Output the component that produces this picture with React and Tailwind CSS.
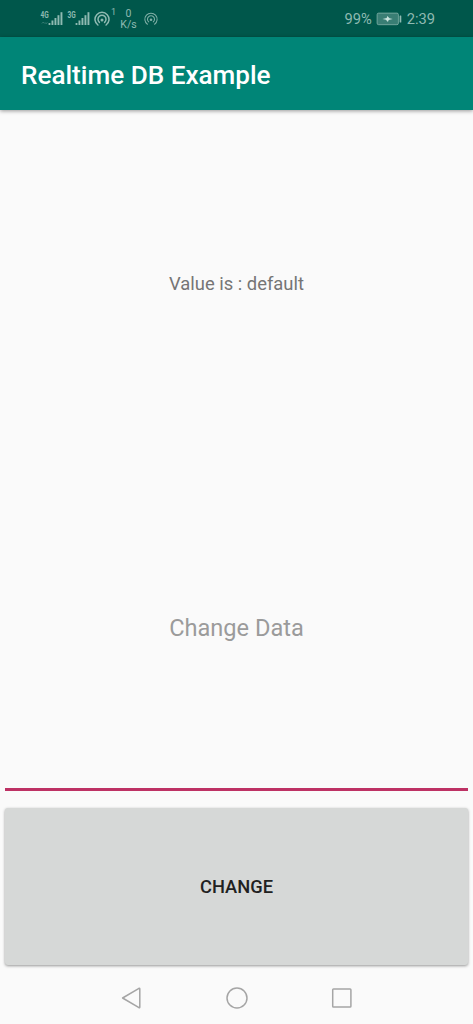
import React, { useState } from 'react';

const SignalIcon = ({ label, idle }) => (
  <svg width="22" height="16" viewBox="0 0 22 16" className="shrink-0 overflow-visible">
    <text x="-0.6" y="6.8" fontSize="8.5" fontWeight="700" textLength="8.2" lengthAdjust="spacingAndGlyphs" fill="currentColor">
      {label}
    </text>
    {idle && (
      <path d="M0.8 12.6l1.3-1.6 1.3 1.6M3.8 11.2l1.3 1.6 1.3-1.6" fill="none" stroke="currentColor" strokeWidth="0.8" opacity="0.4" />
    )}
    <g fill="currentColor">
      <rect x="7.6" y="12" width="1.8" height="2" />
      <rect x="10.5" y="9.5" width="1.9" height="4.5" />
      <rect x="13.5" y="7" width="1.9" height="7" />
      <rect x="16.5" y="4.2" width="1.9" height="9.8" />
      <rect x="19.5" y="1.2" width="1.9" height="12.8" />
    </g>
  </svg>
);

const HotspotIcon = ({ size, strokeWidth }) => (
  <svg width={size} height={size} viewBox="0 0 16 16" fill="none" stroke="currentColor" strokeWidth={strokeWidth} strokeLinecap="round" className="shrink-0">
    <path d="M3.9 14a7 7 0 1 1 8.2 0" />
    <path d="M5.4 11.4a4 4 0 1 1 5.2 0" />
    <circle cx="8" cy="8.9" r="1.5" fill="currentColor" stroke="none" />
  </svg>
);

const BatteryIcon = () => (
  <svg width="26" height="14" viewBox="0 0 26 14" className="shrink-0">
    <rect x="1.1" y="1.1" width="21.3" height="11.6" rx="1.5" fill="currentColor" fillOpacity="0.4" stroke="currentColor" strokeOpacity="0.7" />
    <path d="M6.5 7l4.2-1 .6-2 2.2 2.2 3.2.8-4 1-.8 2-2-2.2z" fill="#c9e3dd" />
    <rect x="23.6" y="3.6" width="1.7" height="6.8" rx="0.5" fill="currentColor" />
  </svg>
);

const StatusBar = () => (
  <div className="flex h-[37px] shrink-0 items-center justify-between bg-[#00574b] pl-[41px] pr-[38px] text-[#8fbab2]">
    <div className="flex items-center pt-px">
      <SignalIcon label="4G" idle />
      <div className="ml-[5px] flex">
        <SignalIcon label="3G" />
      </div>
      <div className="ml-[4px] flex">
        <HotspotIcon size={16} strokeWidth={1.5} />
      </div>
      <span className="ml-px w-[7px] pb-[14px] text-[9px] leading-none">1</span>
      <div className="ml-[2px] flex w-[17px] flex-col items-center text-[10.5px] leading-[11.5px]">
        <span>0</span>
        <span>K/s</span>
      </div>
      <div className="ml-[7px] flex opacity-90">
        <HotspotIcon size={14} strokeWidth={1.2} />
      </div>
    </div>
    <div className="flex items-center pt-px text-[14.7px] leading-none">
      <span>99%</span>
      <div className="ml-1 mr-[5px] flex">
        <BatteryIcon />
      </div>
      <span>2:39</span>
    </div>
  </div>
);

const NavigationBar = () => (
  <div className="flex h-[51px] shrink-0 items-center justify-center gap-[81px] pb-px text-[#a5a5a5]">
    <svg width="24" height="24" viewBox="0 0 24 24" fill="none" stroke="currentColor" strokeWidth="1.5" strokeLinejoin="round">
      <path d="M2.6 12L19 2.3Q19.8 2 19.8 3V21Q19.8 22 19 21.7Z" />
    </svg>
    <svg width="24" height="24" viewBox="0 0 24 24" fill="none" stroke="currentColor" strokeWidth="1.5">
      <circle cx="12" cy="12" r="10" />
    </svg>
    <svg width="24" height="24" viewBox="0 0 24 24" fill="none" stroke="currentColor" strokeWidth="1.5">
      <rect x="2.7" y="2.9" width="18.2" height="18.2" rx="0.8" />
    </svg>
  </div>
);

export const App = () => {
  const [value, setValue] = useState('default');
  const [data, setData] = useState('');

  return (
    <div className="flex h-[1024px] w-full flex-col bg-[#fafafa] font-['Roboto',sans-serif]">
      <StatusBar />

      {/* App bar */}
      <header className="z-10 flex h-[73px] shrink-0 items-center bg-[#008577] pl-[21px] pt-[3px] shadow-[0_1px_4px_rgba(0,0,0,0.4)]">
        <h1 className="text-[26.1px] font-medium leading-none text-white">Realtime DB Example</h1>
      </header>

      <main className="flex flex-1 flex-col px-[5px]">
        <div className="flex h-[347px] items-center justify-center text-[18.4px] text-[#757575]">
          Value is : {value}
        </div>

        <input
          type="text"
          value={data}
          onChange={(e) => setData(e.target.value)}
          placeholder="Change Data"
          className="h-[334px] w-full border-b-3 border-[#bd3164] pt-[11px] text-center text-[23.6px] text-[#212121] outline-none placeholder:text-[#9b9b9b]"
        />

        <button
          onClick={() => setValue(data)}
          className="mt-[17px] h-[157px] w-full rounded-[3px] bg-[#d6d8d7] text-[18.3px] font-medium text-[#212121] shadow-[0_1px_3px_rgba(0,0,0,0.4)]"
        >
          CHANGE
        </button>
      </main>

      <NavigationBar />
    </div>
  );
};

export default App;
